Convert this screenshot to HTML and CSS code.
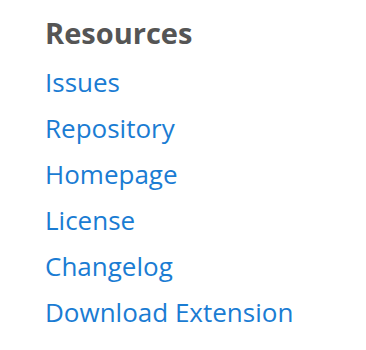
FILE: index.html
```html
<html>
<head>
  <meta charset="utf-8" />
  <title>Resources</title>
  <link rel="stylesheet" href="styles.css">
</head>
<body>
<div class="resources">
  <h2 class="title">Resources</h2>
  <ul class="links">
    <li><a href="#">Issues</a></li>
    <li><a href="#">Repository</a></li>
    <li><a href="#">Homepage</a></li>
    <li><a href="#">License</a></li>
    <li><a href="#">Changelog</a></li>
    <li><a href="#">Download Extension</a></li>
  </ul>
</div>
</body>
</html>
```

FILE: styles.css
```css
body {
  margin: 0;
  background: #ffffff;
  font-family: "Open Sans", "Noto Sans", sans-serif;
}

.resources {
  padding: 13px 0 0 45px;
}

.title {
  margin: 0 0 6px 0;
  font-size: 29px;
  font-weight: 700;
  color: #555555;
  line-height: 40px;
}

.links {
  list-style: none;
  margin: 0;
  padding: 0;
}

.links li {
  line-height: 46px;
  font-size: 26px;
}

.links a {
  color: #1a7cd3;
  text-decoration: none;
}
```
